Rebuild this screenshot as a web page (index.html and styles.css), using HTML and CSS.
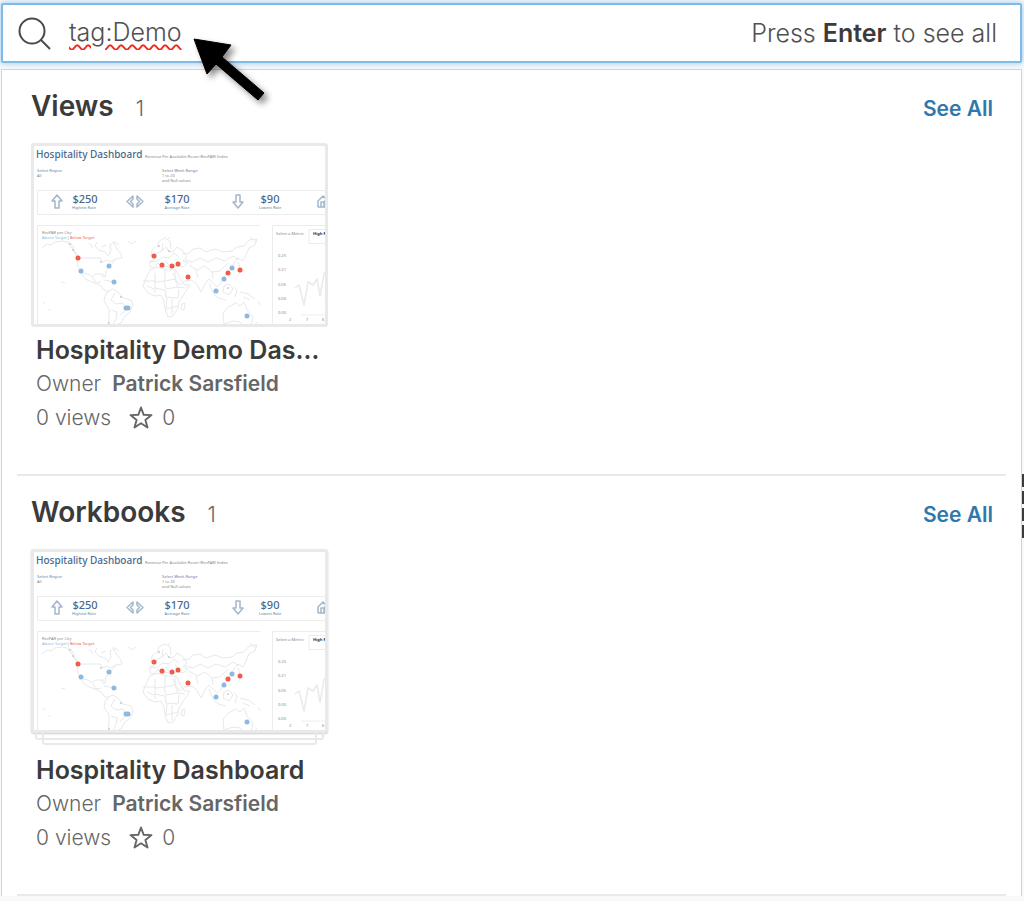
FILE: index.html
```html
<!DOCTYPE html>
<html lang="en">
<head>
<meta charset="utf-8">
<meta name="viewport" content="width=device-width, initial-scale=1">
<title>Search</title>
<link rel="stylesheet" href="styles.css">
</head>
<body>
<svg class="defs" width="0" height="0" aria-hidden="true">
  <defs>
    <symbol id="star" viewBox="0 0 24 24">
      <path d="M12 1.500l2.700 7.300 7.800.3-6.100 4.800 2.100 7.600-6.500-4.300-6.500 4.300 2.100-7.600-6.100-4.800 7.800-.3z" fill="none" stroke="#666" stroke-width="1.900" stroke-linejoin="round"/>
    </symbol>
    <g id="dash-art">
      <g fill="none" stroke="#ececec">
        <path d="M296 47.500H6.500v24H296M229 82.500H6.500V183M241.500 183V82.500H296M296 86.500h-18v14h18"/>
      </g>
      <g fill="none" stroke="#a3b6ca" stroke-width="1.500" stroke-linejoin="round">
        <path d="M26 52l5 6h-3v7h-4v-7h-3zM207 65l5-6h-3v-7h-4v7h-3z"/>
        <path d="M102 53l-6 5.500 6 5.500v-3l-2.500-2.500L102 56zM106 53l6 5.500-6 5.500v-3l2.500-2.500L106 56z"/>
        <path d="M287 64v-6l5-5 5 5M287 64h10M290 64v-5h3v5M294 57v7"/>
      </g>
      <g fill="none" stroke="#e6e9ea" stroke-width="1" stroke-linejoin="round">
        <path d="M11 105l5-4 4 1 4-3 7-1 5 1 4 5 5 8 1 6 1 6 3 6 4 6 7 3 5 2 4 2 3 4 5 2M37 98l5 5 1 4 4 6M47 115h22l3 4 4-2 3 2 6-3M52 130l5 1 4 3 3-3h6l3 4M66 99l-2 4 4 4 6 2 3 4 3-5-1-6 5-3 4 3M82 98l4 8 4 5 1 4-6 1-6 7-4 5-1 6-3-4M62 135l3 5 5-1M73 137l6 1 5 1M97 98l3 3 5-3M30 139l4 1M13 159v2M18 166l1 2M58 100l4 5M70 104l5-2"/>
        <path d="M77 148l5-2 6 4 4 5 8 2 2 5-3 7-6 5-3 6-3 1-2 3M77 148l-3 5-1 5 5 8v8l-1 10M84 150l-4 7 5 4 7-1 3 7-6 5M80 167l6 2-1 7-4 7"/>
        <path d="M119 127l8-3 9 3h9l5 10 4 5h5l-6 9-5 8-1 6-5 8-5 1-3-8-1-8-3-6-6 1-7-3-5-7 3-8zM112 138h12v12M124 130v9l10-1v-11M134 138l10-2v-9M133 138l2 8 12-2-3-8M124 145l10 2 1 7 12 1 1-9M136 155l-1 11 12-3M141 156v15M147 144l7 1M116 143l7 3M154 160l-1 7-3-1 1-5z"/>
        <path d="M119 124v-6l5-2 2-6 5-2 4-4 3 5 5-1 3-4 5 3 5 7-4 4 5 2-5 4-8-1-4 3-4-3-5 2-4-5-4 5zM120 113l1-6 3-3M126 105l2-7 6-3 5 3 1 8M131 108l1-8M137 96l2-2M118 119l9-1 4-4 7 1 5-5 5 4M134 118l5 5M144 116l5 5"/>
        <path d="M151 111l7-1 4-4 7-1 6 4 9-3 8 3 9-1 5-4 7-1 5-6 8-1-2 6-6 3-3 7-3 6-5-3-4 5-3 6-6 7-4 7-4 4-4-4-4-4-4 5-4 8-5-9-5-3-6 1-5 4-4-5-3-7M154 117l8 2 7-4 8 4 8-4 9 3 8-5 6 4M158 122l8 5 8-4 7 6 8-1 8-8M165 127l2 8M181 129l1 7M207 119l3 9-3 5"/>
        <path d="M178 140l4 10 5 5 8 2M193 143l5-2 4 5-4 6-6-3zM203 144l3 3-2 7M209 149l8 2 7 5M212 154l7 3M219 94l6 5M192 170l5-6 8-4 4 3 4-4 3 8 6 7-2 8-6 2-5-5-7-1-9 3zM227 158l2 4M223 183l3-4"/>
        <path d="M270 172h26" stroke="#eee"/>
        <path d="M264 145l4-3 5 20 4-23 5 3 4-6 3 17 4-22 5-7 1-14" stroke="#e8eaeb" stroke-width="1.500"/>
      </g>
      <g fill="#ccc"><circle cx="39" cy="101" r="1"/><circle cx="42" cy="107" r="1"/><circle cx="70" cy="119" r="1"/><circle cx="90" cy="154" r="1"/><circle cx="128" cy="103" r="1"/><circle cx="138" cy="108" r="1"/><circle cx="197" cy="145" r="1"/><circle cx="78" cy="180" r="1"/></g>
      <g fill="#f15b48"><circle cx="47" cy="115" r="2.500"/><circle cx="123" cy="113" r="2.500"/><circle cx="131" cy="122" r="2.500"/><circle cx="141" cy="123" r="2.500"/><circle cx="147" cy="121" r="2.500"/><circle cx="157" cy="134" r="2.500"/><circle cx="197" cy="130" r="2.500"/><circle cx="209" cy="127" r="2.500"/></g>
      <g fill="#8fb8dc"><circle cx="50" cy="128" r="2.500"/><circle cx="78" cy="123" r="2.500"/><circle cx="83" cy="139" r="2.500"/><circle cx="95" cy="165" r="2.500"/><circle cx="97" cy="165" r="2.500"/><circle cx="201" cy="125" r="2.500"/><circle cx="193" cy="136" r="2.500"/><circle cx="185" cy="148" r="2.500"/><circle cx="216" cy="173" r="2.500"/></g>
    </g>
  </defs>
</svg>

<form class="search" role="search">
  <svg class="search-icon" viewBox="0 0 34 34" aria-hidden="true"><circle cx="14" cy="15" r="12.500"/><path d="M23 24l9 9"/></svg>
  <input class="search-input" type="text" aria-label="Search" value="tag:Demo" spellcheck="false">
  <span class="search-hint">Press <b>Enter</b> to see all</span>
  <svg class="pointer" viewBox="0 0 84 72" aria-hidden="true"><path d="M4 4l37 6-9 12 42 36-6 7-42-36-9 10z"/></svg>
</form>

<main class="results">
  <section class="group">
    <header class="group-head">
      <h2 class="group-title">Views</h2><span class="count">1</span>
      <a class="see-all" href="#views">See All</a>
    </header>
    <article class="card">
      <div class="thumb">
        <svg class="dash" viewBox="3 3 291 178" role="img" aria-label="Hospitality Dashboard preview">
          <use href="#dash-art"/>
          <text class="d-title" x="5" y="15">Hospitality Dashboard</text>
          <text class="d-tiny" x="114" y="15">Revenue Per Available Room (RevPAR) Index</text>
          <text class="d-tiny d-blue" x="6" y="29">Select Region</text><text class="d-tiny" x="6" y="34">All</text>
          <text class="d-tiny d-blue" x="131" y="29">Select Week Range</text><text class="d-tiny" x="131" y="34">1 to 20</text><text class="d-tiny" x="131" y="39">and Null values</text>
          <g text-anchor="middle"><text class="d-num" x="54" y="60">$250</text><text class="d-num" x="146" y="60">$170</text><text class="d-num" x="239" y="60">$90</text>
          <text class="d-tiny d-blue" x="53" y="66">Highest Rate</text><text class="d-tiny d-blue" x="146" y="66">Average Rate</text><text class="d-tiny d-blue" x="239" y="66">Lowest Rate</text></g>
          <text class="d-tiny" x="11" y="91">RevPAR per City</text>
          <text class="d-tiny d-sky" x="11" y="96">Above Target</text><text class="d-tiny" x="36" y="96">|</text><text class="d-tiny d-red" x="39" y="96">Below Target</text>
          <text class="d-tiny" x="245" y="92">Select a Metric:</text><text class="d-tiny d-dark" x="282" y="92">High R</text>
          <text class="d-tiny" x="247" y="114">0.25</text><text class="d-tiny" x="247" y="128">0.21</text><text class="d-tiny" x="247" y="143">0.05</text><text class="d-tiny" x="247" y="157">0.00</text><text class="d-tiny" x="247" y="171">0.00</text>
          <text class="d-tiny" x="258" y="178">2</text><text class="d-tiny" x="275" y="178">7</text><text class="d-tiny" x="291" y="178">6</text>
        </svg>
      </div>
      <div class="meta">
        <h3 class="name">Hospitality Demo Dashboard</h3>
        <p class="line">Owner <b class="owner">Patrick Sarsfield</b></p>
        <p class="line">0 views <svg class="star" aria-hidden="true"><use href="#star"/></svg>0</p>
      </div>
    </article>
  </section>

  <section class="group">
    <header class="group-head">
      <h2 class="group-title">Workbooks</h2><span class="count">1</span>
      <a class="see-all" href="#workbooks">See All</a>
    </header>
    <article class="card">
      <div class="thumb stacked">
        <svg class="dash" viewBox="3 3 291 178" role="img" aria-label="Hospitality Dashboard preview">
          <use href="#dash-art"/>
          <text class="d-title" x="5" y="15">Hospitality Dashboard</text>
          <text class="d-tiny" x="114" y="15">Revenue Per Available Room (RevPAR) Index</text>
          <text class="d-tiny d-blue" x="6" y="29">Select Region</text><text class="d-tiny" x="6" y="34">All</text>
          <text class="d-tiny d-blue" x="131" y="29">Select Week Range</text><text class="d-tiny" x="131" y="34">1 to 20</text><text class="d-tiny" x="131" y="39">and Null values</text>
          <g text-anchor="middle"><text class="d-num" x="54" y="60">$250</text><text class="d-num" x="146" y="60">$170</text><text class="d-num" x="239" y="60">$90</text>
          <text class="d-tiny d-blue" x="53" y="66">Highest Rate</text><text class="d-tiny d-blue" x="146" y="66">Average Rate</text><text class="d-tiny d-blue" x="239" y="66">Lowest Rate</text></g>
          <text class="d-tiny" x="11" y="91">RevPAR per City</text>
          <text class="d-tiny d-sky" x="11" y="96">Above Target</text><text class="d-tiny" x="36" y="96">|</text><text class="d-tiny d-red" x="39" y="96">Below Target</text>
          <text class="d-tiny" x="245" y="92">Select a Metric:</text><text class="d-tiny d-dark" x="282" y="92">High R</text>
          <text class="d-tiny" x="247" y="114">0.25</text><text class="d-tiny" x="247" y="128">0.21</text><text class="d-tiny" x="247" y="143">0.05</text><text class="d-tiny" x="247" y="157">0.00</text><text class="d-tiny" x="247" y="171">0.00</text>
          <text class="d-tiny" x="258" y="178">2</text><text class="d-tiny" x="275" y="178">7</text><text class="d-tiny" x="291" y="178">6</text>
        </svg>
      </div>
      <div class="meta">
        <h3 class="name">Hospitality Dashboard</h3>
        <p class="line">Owner <b class="owner">Patrick Sarsfield</b></p>
        <p class="line">0 views <svg class="star" aria-hidden="true"><use href="#star"/></svg>0</p>
      </div>
    </article>
  </section>
</main>
</body>
</html>
```
FILE: styles.css
```css
* { box-sizing: border-box; }

body {
  margin: 0;
  padding: 3px 2px 4px 1px;
  font-family: Inter, "Liberation Sans", sans-serif;
  color: #3b3b3b;
  background: repeating-linear-gradient(#3b3b3b 0 13px, #f4f6f8 13px 17px) right 474px / 2px 64px no-repeat #f8f9fa;
}

h2, h3, p { margin: 0; }

.defs { position: absolute; }

.search {
  position: relative;
  display: flex;
  align-items: center;
  height: 60px;
  padding: 0 23px 0 15px;
  border: 2px solid #7fbbe6;
  border-radius: 2px;
  background: #fff;
  box-shadow: 0 0 6px #8fc4ec;
}

.search-icon {
  flex: none;
  width: 34px;
  height: 34px;
  fill: none;
  stroke: #4a4a4a;
  stroke-width: 2;
}

.search-input {
  flex: 1;
  min-width: 0;
  margin: 0 0 0 17px;
  padding: 0 0 2px;
  border: 0;
  outline: 0;
  background: none;
  font: 300 25px/36px Inter, "Liberation Sans", sans-serif;
  color: #505050;
  text-decoration: underline wavy #f0281e 2px;
  text-underline-offset: 3px;
}

.search-hint {
  font-size: 25px;
  font-weight: 300;
  line-height: 36px;
  color: #505050;
  white-space: nowrap;
}

.search-hint b { font-weight: 600; color: #3b3b3b; }

.pointer {
  position: absolute;
  top: 30px;
  left: 187px;
  width: 84px;
  height: 72px;
  z-index: 1;
  overflow: visible;
  fill: #000;
  stroke: #000;
  stroke-linejoin: round;
  filter: drop-shadow(4px 4px 3px rgba(0, 0, 0, .45));
}

.results {
  margin-top: 6px;
  padding: 0 15px;
  border: 1px solid #d4d4d4;
  border-bottom: 0;
  background: #fff;
}

.group {
  padding: 16px 13px 39px 14px;
  border-bottom: 2px solid #e9e9e9;
}

.group-head {
  display: flex;
  align-items: baseline;
  height: 57px;
}

.group-title {
  font-size: 28px;
  font-weight: 600;
  line-height: 40px;
}

.count {
  margin-left: 22px;
  font-size: 21px;
  font-weight: 300;
  color: #666;
}

.see-all {
  margin-left: auto;
  font-size: 21px;
  font-weight: 600;
  color: #2f78ad;
  text-decoration: none;
}

.card { width: 297px; }

.thumb {
  position: relative;
  border: 3px solid #e9e9e9;
  border-radius: 3px;
  background: #fff;
}

.dash { display: block; width: 100%; height: auto; overflow: hidden; }

.stacked { margin-bottom: 14px; box-shadow: 0 1px 2px #ccc; }

.stacked::before,
.stacked::after {
  content: "";
  position: absolute;
  top: 100%;
  border: 2px solid #e9e9e9;
  border-top: 0;
  border-radius: 0 0 3px 3px;
}

.stacked::before { left: 1px; right: 1px; height: 8px; }
.stacked::after { left: 8px; right: 8px; height: 13px; }

.meta { padding: 6px 5px 0; }

.name {
  overflow: hidden;
  font-size: 25px;
  font-weight: 600;
  line-height: 34px;
  text-overflow: ellipsis;
  white-space: nowrap;
}

.line {
  display: flex;
  align-items: center;
  font-size: 21px;
  font-weight: 300;
  line-height: 34px;
  color: #666;
  white-space: nowrap;
}

.owner { margin-left: 11px; font-weight: 600; }

.star { width: 24px; height: 24px; margin: 0 9px 0 18px; }

.d-title, .d-num, .d-tiny { font-family: "Noto Sans", sans-serif; }
.d-title { font-size: 10px; font-weight: 500; fill: #49698f; }
.d-num { font-size: 11px; font-weight: 500; fill: #49698f; }
.d-tiny { font-size: 4px; fill: #888; }
.d-blue { fill: #6684a6; }
.d-sky { fill: #8fb8dc; }
.d-red { fill: #f15b48; }
.d-dark { font-weight: 700; fill: #333; }
```
